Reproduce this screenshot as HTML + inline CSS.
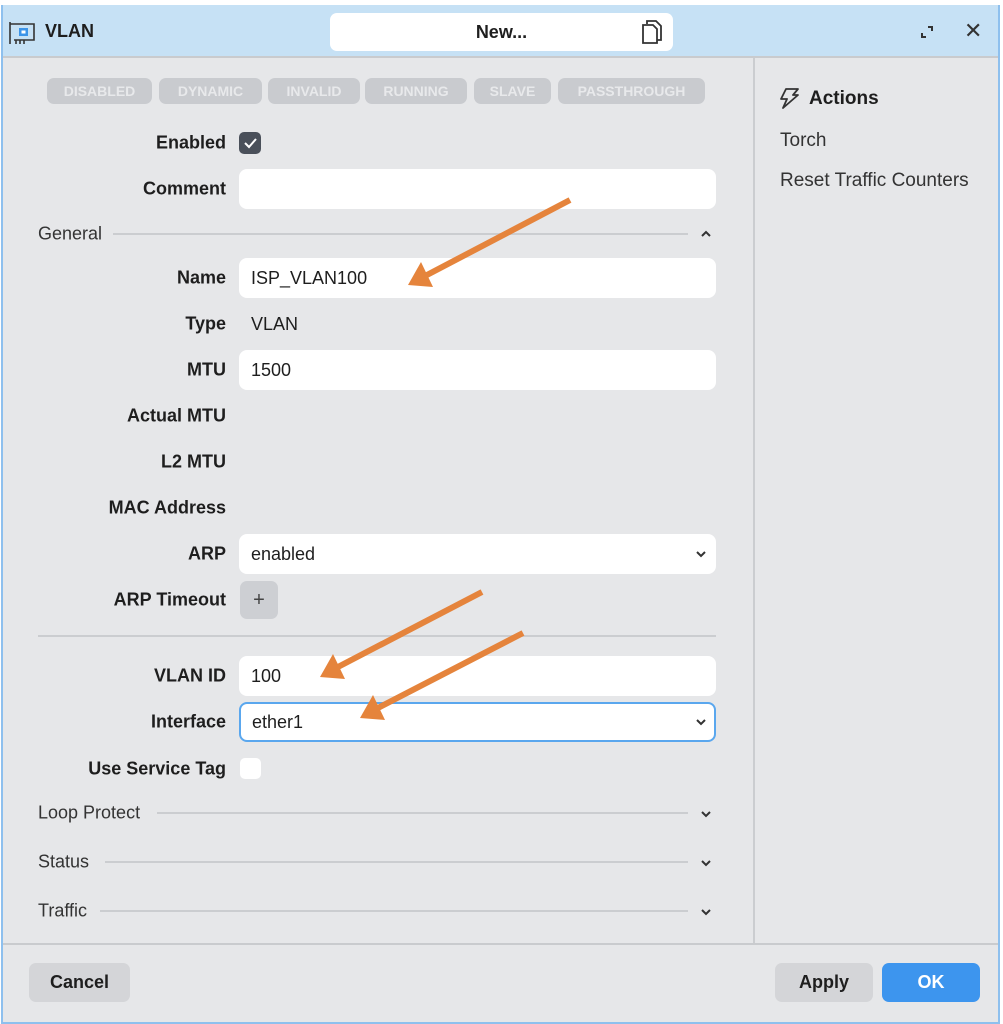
<!DOCTYPE html>
<html><head><meta charset="utf-8"><style>
*{box-sizing:border-box;margin:0;padding:0}
body{width:1003px;height:1024px;background:#fff;font-family:"Liberation Sans",sans-serif;position:relative;overflow:hidden;color:#1e1e1e}
.a{position:absolute}
.win{left:1px;top:5px;width:999px;height:1019px;background:#e6e7e9;border:2px solid #8ec0ee;border-top:none}
.tb{left:3px;top:5px;width:995px;height:53px;background:#c6e1f5;border-bottom:2px solid #c9cbce}
.lbl{position:absolute;right:777px;font-weight:bold;font-size:18px;text-align:right;white-space:nowrap;transform:translateY(-50%)}
.inp{position:absolute;left:239px;width:477px;height:40px;background:#fff;border-radius:8px;font-size:18px;padding-left:12px;line-height:40px}
.sec{position:absolute;left:38px;font-size:18px;color:#333;transform:translateY(-50%)}
.line{position:absolute;height:2px;background:#cbcdd0}
.badge{position:absolute;top:78px;height:26px;background:#c9cbcf;color:#e8e9eb;font-weight:bold;font-size:14px;border-radius:7px;text-align:center;line-height:26px}
.btn{position:absolute;top:963px;height:39px;border-radius:7px;font-weight:bold;font-size:18px;text-align:center;line-height:39px;background:#d4d5d8}
.cv{position:absolute}
</style></head><body>
<div class="a win"></div>
<div class="a tb"></div>
<svg class="a" style="left:8px;top:20px" width="30" height="26" viewBox="0 0 30 26"><path d="M2 2v22M2 4h24v16H6M8 20v4M12 20v4M16 20v4" stroke="#333" stroke-width="1.6" fill="none"/><rect x="11" y="8" width="9" height="8" fill="#3c94e8"/><rect x="13.5" y="10.5" width="4" height="3" fill="#fff"/></svg>
<div class="a" style="left:45px;top:21px;font-weight:bold;font-size:18px">VLAN</div>
<div class="a" style="left:330px;top:13px;width:343px;height:38px;background:#fff;border-radius:7px;text-align:center;font-weight:bold;font-size:18px;line-height:38px">New...</div>
<svg class="a" style="left:640px;top:19px" width="24" height="26" viewBox="0 0 24 26"><path d="M7 5V2h9l5 5v14h-4M3 6h10l4 4v14H3z" stroke="#333" stroke-width="1.8" fill="none"/></svg>
<svg class="a" style="left:920px;top:25px" width="14" height="14" viewBox="0 0 14 14"><path d="M8 2h4v4M2 8v4h4" stroke="#333" stroke-width="2" fill="none"/></svg>
<div class="a" style="left:964px;top:18px;font-size:22px;color:#333">✕</div>

<div class="badge" style="left:47px;width:105px">DISABLED</div>
<div class="badge" style="left:159px;width:103px">DYNAMIC</div>
<div class="badge" style="left:268px;width:92px">INVALID</div>
<div class="badge" style="left:365px;width:102px">RUNNING</div>
<div class="badge" style="left:474px;width:77px">SLAVE</div>
<div class="badge" style="left:558px;width:147px">PASSTHROUGH</div>

<div class="a" style="left:753px;top:58px;width:2px;height:886px;background:#cbcdd0"></div>
<svg class="a" style="left:778px;top:87px" width="22" height="22" viewBox="0 0 22 22"><path d="M8 2h12l-5 6h5L5 21l4-9H3z" stroke="#333" stroke-width="1.8" fill="none" stroke-linejoin="round"/></svg>
<div class="a" style="left:809px;top:88px;font-weight:bold;font-size:19px">Actions</div>
<div class="a" style="left:780px;top:130px;font-size:19px;color:#333">Torch</div>
<div class="a" style="left:780px;top:170px;font-size:19px;color:#333">Reset Traffic Counters</div>

<div class="lbl" style="top:143px">Enabled</div>
<div class="a" style="left:239px;top:132px;width:22px;height:22px;background:#4a505a;border-radius:5px"><svg width="22" height="22"><path d="M6 11l4 4 7-8" stroke="#fff" stroke-width="2" fill="none"/></svg></div>
<div class="lbl" style="top:189px">Comment</div>
<div class="inp" style="top:169px"></div>
<div class="sec" style="top:234px">General</div>
<div class="line" style="left:113px;top:233px;width:575px"></div>
<svg class="cv" style="left:699px;top:229px" width="14" height="10"><path d="M3 7l4-4 4 4" stroke="#333" stroke-width="2" fill="none"/></svg>
<div class="lbl" style="top:278px">Name</div>
<div class="inp" style="top:258px">ISP_VLAN100</div>
<div class="lbl" style="top:324px">Type</div>
<div class="a" style="left:251px;top:314px;font-size:18px">VLAN</div>
<div class="lbl" style="top:370px">MTU</div>
<div class="inp" style="top:350px">1500</div>
<div class="lbl" style="top:416px">Actual MTU</div>
<div class="lbl" style="top:462px">L2 MTU</div>
<div class="lbl" style="top:508px">MAC Address</div>
<div class="lbl" style="top:554px">ARP</div>
<div class="inp" style="top:534px">enabled<svg class="cv" style="right:8px;top:15px" width="14" height="10"><path d="M3 3l4 4 4-4" stroke="#333" stroke-width="2" fill="none"/></svg></div>
<div class="lbl" style="top:600px">ARP Timeout</div>
<div class="a" style="left:240px;top:581px;width:38px;height:38px;background:#cdcfd3;border-radius:7px;text-align:center;line-height:38px;font-size:20px;color:#444">+</div>
<div class="line" style="left:38px;top:635px;width:678px"></div>
<div class="lbl" style="top:676px">VLAN ID</div>
<div class="inp" style="top:656px">100</div>
<div class="lbl" style="top:722px">Interface</div>
<div class="inp" style="top:702px;border:2px solid #5aa7ee;line-height:36px;padding-left:11px">ether1<svg class="cv" style="right:6px;top:13px" width="14" height="10"><path d="M3 3l4 4 4-4" stroke="#333" stroke-width="2" fill="none"/></svg></div>
<div class="lbl" style="top:769px">Use Service Tag</div>
<div class="a" style="left:240px;top:758px;width:21px;height:21px;background:#fff;border-radius:5px"></div>
<div class="sec" style="top:813px">Loop Protect</div>
<div class="line" style="left:157px;top:812px;width:531px"></div>
<div class="sec" style="top:862px">Status</div>
<div class="line" style="left:105px;top:861px;width:583px"></div>
<div class="sec" style="top:911px">Traffic</div>
<div class="line" style="left:100px;top:910px;width:588px"></div>
<svg class="cv" style="left:699px;top:809px" width="14" height="10"><path d="M3 3l4 4 4-4" stroke="#333" stroke-width="2" fill="none"/></svg>
<svg class="cv" style="left:699px;top:858px" width="14" height="10"><path d="M3 3l4 4 4-4" stroke="#333" stroke-width="2" fill="none"/></svg>
<svg class="cv" style="left:699px;top:907px" width="14" height="10"><path d="M3 3l4 4 4-4" stroke="#333" stroke-width="2" fill="none"/></svg>

<div class="a" style="left:3px;top:943px;width:995px;height:2px;background:#c9cbce"></div>
<div class="btn" style="left:29px;width:101px">Cancel</div>
<div class="btn" style="left:775px;width:98px">Apply</div>
<div class="btn" style="left:882px;width:98px;background:#3d95ee;color:#fff">OK</div>

<svg class="a" style="left:0;top:0" width="1003" height="1024">
<g stroke="#e5843c" stroke-width="6" fill="#e5843c">
<line x1="570" y1="200" x2="425" y2="276"/>
<line x1="482" y1="592" x2="336" y2="668"/>
<line x1="523" y1="633" x2="376" y2="709"/>
</g>
<g fill="#e5843c">
<polygon points="408,285 421,262 433,287"/>
<polygon points="320,677 333,654 345,679"/>
<polygon points="360,718 373,695 385,720"/>
</g>
</svg>
</body></html>
